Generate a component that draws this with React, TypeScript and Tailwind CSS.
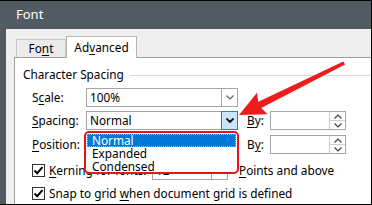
import React from 'react';

function Chevron({ className = '', strong = false }: { className?: string; strong?: boolean }) {
  return (
    <svg width="8" height="5" viewBox="0 0 8 5" className={className}>
      <path d="M0.5 0.5 L4 4 L7.5 0.5" fill="none" stroke="currentColor" strokeWidth={strong ? 1.8 : 1.2} />
    </svg>
  );
}

function Check() {
  return (
    <div className="w-[13px] h-[13px] border border-[#333] bg-white flex items-center justify-center shrink-0">
      <svg width="11" height="11" viewBox="0 0 11 11">
        <path d="M1.5 5.5 L4.2 8.2 L9.5 2.2" fill="none" stroke="#000" strokeWidth="2" />
      </svg>
    </div>
  );
}

function Combo({ value, w, active = false }: { value: string; w: string; active?: boolean }) {
  return (
    <div className={`${w} h-[19px] border border-[#a5a5a5] bg-white flex items-center`}>
      <span className="flex-1 pl-[3px] leading-none">{value}</span>
      {active ? (
        <div className="w-[17px] h-[19px] -mr-px border border-[#2b7bc0] bg-[#cce4f7] flex items-center justify-center text-black">
          <Chevron strong />
        </div>
      ) : (
        <div className="w-[17px] h-[19px] -mr-px border border-[#a5a5a5] bg-white flex items-center justify-center text-[#606060]">
          <Chevron />
        </div>
      )}
    </div>
  );
}

function Spin() {
  return (
    <div className="w-[76px] h-[19px] border border-[#a5a5a5] bg-white flex justify-end">
      <div className="w-[16px] h-full border-l border-[#d0d0d0] flex flex-col">
        <div className="flex-1 flex items-center justify-center text-[#404040] border-b border-[#d0d0d0]">
          <Chevron className="rotate-180" />
        </div>
        <div className="flex-1 flex items-center justify-center text-[#404040]">
          <Chevron />
        </div>
      </div>
    </div>
  );
}

export default function App() {
  return (
    <div className="relative w-[372px] h-[205px] overflow-hidden bg-[#505b62] border-t border-r border-b border-black flex flex-col font-['Noto_Sans',sans-serif] text-[11.8px] text-black">
      <div className="h-[28px] shrink-0 flex items-center pl-[16px] text-white text-[13px]">Font</div>

      <div className="flex-1 flex pl-[6px]">
        <div className="flex-1 bg-[#efefef] flex flex-col pl-[8px]">
          <div className="h-[28px] shrink-0 flex items-end pl-[2px]">
            <div className="w-[50px] h-[18px] border border-b-0 border-[#c8c8c8] bg-[#ebebeb] flex items-center justify-center">
              Fo<span className="underline underline-offset-2">n</span>t
            </div>
            <div className="relative z-10 -mb-px w-[71px] h-[22px] border border-b-0 border-[#b5b5b5] bg-white flex items-center justify-center">
              Ad<span className="underline underline-offset-2">v</span>anced
            </div>
          </div>

          <div className="flex-1 bg-white border-l border-t border-[#9e9e9e] flex flex-col">
            <div className="mt-[10px] h-[14px] flex items-center pl-[8px]">
              <span>Character Spacing</span>
              <div className="flex-1 ml-[6px] h-px bg-[#dcdcdc]" />
            </div>

            <div className="mt-[6px] flex items-center pl-[17px]">
              <span className="w-[54px]">S<span className="underline underline-offset-2">c</span>ale:</span>
              <Combo value="100%" w="w-[152px]" />
            </div>

            <div className="mt-[4px] flex items-center pl-[17px]">
              <span className="w-[54px]"><span className="underline underline-offset-2">S</span>pacing:</span>
              <Combo value="Normal" w="w-[152px]" active />
              <span className="ml-[9px] w-[23px]"><span className="underline underline-offset-2">B</span>y:</span>
              <Spin />
            </div>

            <div className="mt-[5px] flex items-center pl-[17px]">
              <span className="w-[54px]"><span className="underline underline-offset-2">P</span>osition:</span>
              <Combo value="Normal" w="w-[152px]" />
              <span className="ml-[9px] w-[23px]">B<span className="underline underline-offset-2">y</span>:</span>
              <Spin />
            </div>

            <div className="mt-[7px] flex items-center pl-[17px]">
              <Check />
              <span className="ml-[4px] w-[103px]"><span className="underline underline-offset-2">K</span>erning for fonts:</span>
              <Combo value="12" w="w-[76px]" />
              <span className="ml-[11px]"><span className="underline underline-offset-2">P</span>oints and above</span>
            </div>

            <div className="mt-[5px] flex items-center pl-[17px]">
              <Check />
              <span className="ml-[4px]">Snap to grid <span className="underline underline-offset-2">w</span>hen document grid is defined</span>
            </div>
          </div>
        </div>
      </div>

      <div className="absolute left-[84px] top-[130px] w-[155px] h-[43px] rounded-[5px] border-[2px] border-[#e8141b] bg-white p-px flex flex-col">
        <div className="h-[13px] bg-[#0078d7] text-white leading-[11px] pl-[4px] border border-dotted border-[#f3a45a]">Normal</div>
        <div className="h-[13px] leading-[13px] pl-[5px]">Expanded</div>
        <div className="h-[13px] leading-[13px] pl-[5px]">Condensed</div>
      </div>

      <svg className="absolute inset-0 pointer-events-none" width="372" height="205" viewBox="0 0 372 205">
        <polygon
          points="239,114 257,91.7 258.3,100.7 343.3,60.5 345,63.5 261.2,106.9 267.6,113.3"
          fill="#ee1c1c"
        />
      </svg>
    </div>
  );
}
